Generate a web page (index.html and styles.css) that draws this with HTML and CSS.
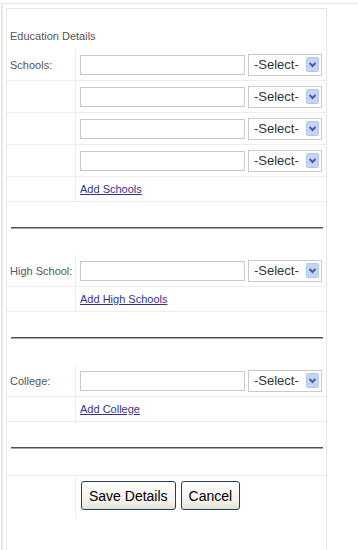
FILE: index.html
```html
<!DOCTYPE html>
<html lang="en">
<head>
    <meta charset="UTF-8">
    <title>Education Details</title>
    <link rel="stylesheet" href="styles.css">
</head>
<body>
    <div class="page">
        <div class="panel">
            <div class="heading">Education Details</div>
            <div class="form">
                <!-- schools -->
                <div class="row field">
                    <div class="label">Schools:</div>
                    <div class="cell">
                        <input type="text" class="box">
                        <div class="select"><span>-Select-</span><svg width="13" height="15" viewBox="0 0 13 15"><rect x="0.5" y="0.5" width="12" height="14" rx="1" fill="#c3d4f9" stroke="#b2c6ef"/><path d="M3.5 6 L6.5 9 L9.5 6" fill="none" stroke="#4a5f86" stroke-width="2"/></svg></div>
                    </div>
                </div>
                <div class="row field">
                    <div class="label"></div>
                    <div class="cell">
                        <input type="text" class="box">
                        <div class="select"><span>-Select-</span><svg width="13" height="15" viewBox="0 0 13 15"><rect x="0.5" y="0.5" width="12" height="14" rx="1" fill="#c3d4f9" stroke="#b2c6ef"/><path d="M3.5 6 L6.5 9 L9.5 6" fill="none" stroke="#4a5f86" stroke-width="2"/></svg></div>
                    </div>
                </div>
                <div class="row field">
                    <div class="label"></div>
                    <div class="cell">
                        <input type="text" class="box">
                        <div class="select"><span>-Select-</span><svg width="13" height="15" viewBox="0 0 13 15"><rect x="0.5" y="0.5" width="12" height="14" rx="1" fill="#c3d4f9" stroke="#b2c6ef"/><path d="M3.5 6 L6.5 9 L9.5 6" fill="none" stroke="#4a5f86" stroke-width="2"/></svg></div>
                    </div>
                </div>
                <div class="row field">
                    <div class="label"></div>
                    <div class="cell">
                        <input type="text" class="box">
                        <div class="select"><span>-Select-</span><svg width="13" height="15" viewBox="0 0 13 15"><rect x="0.5" y="0.5" width="12" height="14" rx="1" fill="#c3d4f9" stroke="#b2c6ef"/><path d="M3.5 6 L6.5 9 L9.5 6" fill="none" stroke="#4a5f86" stroke-width="2"/></svg></div>
                    </div>
                </div>
                <div class="row add">
                    <div class="label"></div>
                    <div class="cell"><a href="#">Add Schools</a></div>
                </div>
                <div class="divider"><hr></div>

                <!-- high school -->
                <div class="row field">
                    <div class="label">High School:</div>
                    <div class="cell">
                        <input type="text" class="box">
                        <div class="select"><span>-Select-</span><svg width="13" height="15" viewBox="0 0 13 15"><rect x="0.5" y="0.5" width="12" height="14" rx="1" fill="#c3d4f9" stroke="#b2c6ef"/><path d="M3.5 6 L6.5 9 L9.5 6" fill="none" stroke="#4a5f86" stroke-width="2"/></svg></div>
                    </div>
                </div>
                <div class="row add">
                    <div class="label"></div>
                    <div class="cell"><a href="#">Add High Schools</a></div>
                </div>
                <div class="divider"><hr></div>

                <!-- college -->
                <div class="row field">
                    <div class="label">College:</div>
                    <div class="cell">
                        <input type="text" class="box">
                        <div class="select"><span>-Select-</span><svg width="13" height="15" viewBox="0 0 13 15"><rect x="0.5" y="0.5" width="12" height="14" rx="1" fill="#c3d4f9" stroke="#b2c6ef"/><path d="M3.5 6 L6.5 9 L9.5 6" fill="none" stroke="#4a5f86" stroke-width="2"/></svg></div>
                    </div>
                </div>
                <div class="row add">
                    <div class="label"></div>
                    <div class="cell"><a href="#">Add College</a></div>
                </div>
                <div class="divider"><hr></div>

                <div class="row actions">
                    <div class="label"></div>
                    <div class="cell">
                        <button type="button" class="btn">Save Details</button>
                        <button type="button" class="btn">Cancel</button>
                    </div>
                </div>
            </div>
        </div>
    </div>
</body>
</html>
```
FILE: styles.css
```css
html,body{
    height: 100%;
}
body{
    margin: 0;
    background: #fff;
    font-family: "Liberation Sans", Arial, sans-serif;
    font-size: 11px;
    color: #555;
    overflow: hidden;
}
.page{
    margin: 3px 0 0 1px;
    padding: 4px 0 0 3px;
    border-top: 1px solid #e6e6e6;
    border-left: 2px solid #e8e8e8;
}
.panel{
    width: 319px;
    min-height: 560px;
    border: 1px solid #e6e6e6;
    border-bottom: none;
}
.heading{
    padding: 21px 0 0 3px;
    line-height: 13px;
    margin-bottom: 6px;
}
/* each form line: label column + content column */
.row{
    display: grid;
    grid-template-columns: 69px 1fr;
    border-bottom: 1px solid #ededed;
}
.label{
    display: flex;
    align-items: center;
    padding-left: 3px;
    border-right: 1px solid #ededed;
}
.cell{
    display: flex;
    align-items: center;
    gap: 3px;
    padding-left: 4px;
}
.field .cell{
    height: 31px;
}
.add .cell{
    height: 24px;
}
.box{
    box-sizing: border-box;
    width: 165px;
    height: 20px;
    margin: 0;
    padding: 0 2px;
    border: 1px solid #c8c8c8;
    background: #fff;
}
.select{
    box-sizing: border-box;
    width: 74px;
    height: 22px;
    display: flex;
    align-items: center;
    justify-content: space-between;
    padding: 0 2px 0 5px;
    border: 1px solid #cacaca;
    background: #fff;
    font-size: 13px;
    color: #333;
}
.select svg{
    display: block;
}
.add a{
    color: #33338a;
    text-decoration: underline;
}
.divider{
    height: 53px;
    box-sizing: border-box;
    padding-top: 25px;
}
.divider hr{
    margin: 0 3px 0 4px;
    height: 0;
    border: none;
    border-top: 1px solid #505050;
    border-bottom: 1px solid #a8a8a8;
}
.actions{
    border-top: 1px solid #ededed;
    border-bottom: none;
}
.actions .cell{
    align-items: flex-start;
    padding: 5px 0 8px 5px;
    gap: 5px;
}
.btn{
    height: 29px;
    margin: 0;
    padding: 0 7px;
    font-family: "Liberation Sans", Arial, sans-serif;
    font-size: 14px;
    color: #000;
    border: 1px solid #22415f;
    border-radius: 3px;
    background: linear-gradient(#fefefc, #f3f1ea 75%, #e2dfd2);
}
```
